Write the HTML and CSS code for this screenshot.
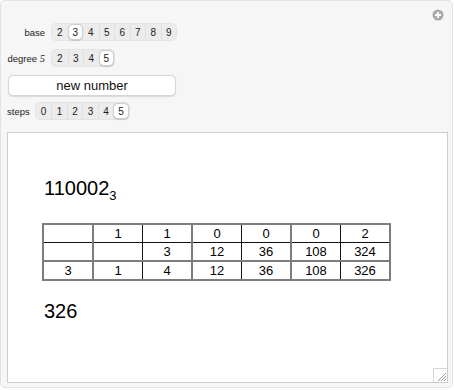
FILE: index.html
```html
<!DOCTYPE html>
<html>
<head>
<meta charset="utf-8">
<link rel="stylesheet" href="styles.css">
</head>
<body>
<div class="panel">
  <svg class="plus" width="12" height="12" viewBox="0 0 12 12">
    <circle cx="6" cy="6" r="5.5" fill="#a9a9a9"/>
    <path d="M6 3v6M3 6h6" stroke="#fff" stroke-width="1.8"/>
  </svg>
  <div class="controls">
    <div class="grid">
      <span class="label">base</span>
      <div class="seg">
        <span class="b">2</span><span class="b on">3</span><span class="b">4</span><span class="b">5</span><span class="b">6</span><span class="b">7</span><span class="b">8</span><span class="b">9</span>
      </div>
      <span class="label">degree <i>5</i></span>
      <div class="seg">
        <span class="b">2</span><span class="b">3</span><span class="b">4</span><span class="b on">5</span>
      </div>
    </div>
    <div class="btn">new number</div>
    <div class="steps">
      <span class="label">steps</span>
      <div class="seg">
        <span class="b">0</span><span class="b">1</span><span class="b">2</span><span class="b">3</span><span class="b">4</span><span class="b on">5</span>
      </div>
    </div>
  </div>
  <div class="output">
    <div class="num">110002<sub>3</sub></div>
    <table class="tbl">
      <tr><td></td><td>1</td><td>1</td><td>0</td><td>0</td><td>0</td><td>2</td></tr>
      <tr><td></td><td></td><td>3</td><td>12</td><td>36</td><td>108</td><td>324</td></tr>
      <tr><td>3</td><td>1</td><td>4</td><td>12</td><td>36</td><td>108</td><td>326</td></tr>
    </table>
    <div class="res">326</div>
    <svg class="grip" width="14" height="14" viewBox="0 0 14 14">
      <rect x="0.5" y="0.5" width="14" height="14" fill="#fff" stroke="#d6d6d6"/>
      <path d="M13 5L5 13M13 8L8 13M13 11L11 13" stroke="#9a9a9a" stroke-width="1"/>
    </svg>
  </div>
</div>
</body>
</html>
```
FILE: styles.css
```css
html, body {
  margin: 0;
  padding: 0;
  background: #fff;
}
body {
  font-family: "Liberation Sans", Arial, sans-serif;
}
.panel {
  position: relative;
  box-sizing: border-box;
  width: 453px;
  height: 388px;
  background: #f6f6f6;
  border: 1px solid #e3e3e3;
  border-radius: 5px;
  padding: 0 5px 0 6px;
}
.plus {
  position: absolute;
  top: 8px;
  right: 8px;
}
.controls {
  padding-top: 22px;
  height: 109px;
  box-sizing: border-box;
}
.grid {
  display: grid;
  grid-template-columns: 38px auto;
  column-gap: 6px;
  row-gap: 8px;
  justify-items: start;
  align-items: center;
}
.label {
  font-size: 9.5px;
  color: #222;
  justify-self: end;
}
.label i {
  font-family: "Liberation Serif", serif;
  font-size: 10.5px;
}
.seg {
  display: flex;
  background: #ececec;
  border: 1px solid #e4e4e4;
  border-radius: 5px;
  padding: 0;
  height: 16px;
}
.b {
  width: 15.5px;
  height: 16px;
  display: flex;
  align-items: center;
  justify-content: center;
  font-size: 10px;
  color: #222;
  box-sizing: border-box;
  border-left: 1px solid #e0e0e0;
}
.b:first-child { border-left: none; }
.b.on {
  background: #fff;
  border: 1px solid #d0d0d0;
  border-radius: 5px;
  box-shadow: 0 0.5px 1px rgba(0,0,0,0.15);
}
.b.on + .b { border-left: none; }
.btn {
  margin: 8px 0 0 1px;
  width: 168px;
  height: 21px;
  box-sizing: border-box;
  background: #fff;
  border: 1px solid #d6d6d6;
  border-radius: 5px;
  display: flex;
  align-items: center;
  justify-content: center;
  font-size: 13px;
  color: #111;
  box-shadow: 0 0.5px 1px rgba(0,0,0,0.12);
}
.steps {
  margin-top: 6px;
  display: flex;
  align-items: center;
  gap: 5px;
}
.steps .label { justify-self: auto; }
.output {
  position: relative;
  margin-top: 22px;
  box-sizing: border-box;
  width: 441px;
  height: 251px;
  background: #fff;
  border: 1px solid #cdcdcd;
  padding: 45px 0 0 34px;
}
.num {
  font-size: 20px;
  line-height: 20px;
  height: 20px;
  color: #000;
  padding-left: 2px;
}
.num sub {
  font-size: 13px;
  line-height: 0;
  vertical-align: -5px;
}
.tbl {
  margin-top: 25px;
  border-collapse: collapse;
  font-size: 13px;
  border: 2px solid #7d7d7d;
}
.tbl td {
  width: 48px;
  height: 17px;
  padding: 0;
  border: 1px solid #111;
  text-align: center;
  line-height: 17px;
}
.tbl td:nth-child(2),
.tbl td:nth-child(4),
.tbl td:nth-child(6) {
  border-left: 2px solid #7d7d7d;
}
.tbl tr:nth-child(3) td {
  border-top: 2px solid #7d7d7d;
}
.tbl tr:first-child td { border-top: 2px solid #7d7d7d; }
.tbl tr:last-child td { border-bottom: 2px solid #7d7d7d; }
.tbl td:first-child { border-left: 2px solid #7d7d7d; }
.tbl td:last-child { border-right: 2px solid #7d7d7d; }
.res {
  margin-top: 20px;
  font-size: 20px;
  line-height: 20px;
  padding-left: 2px;
}
.grip {
  position: absolute;
  right: 0;
  bottom: 0;
}
```
